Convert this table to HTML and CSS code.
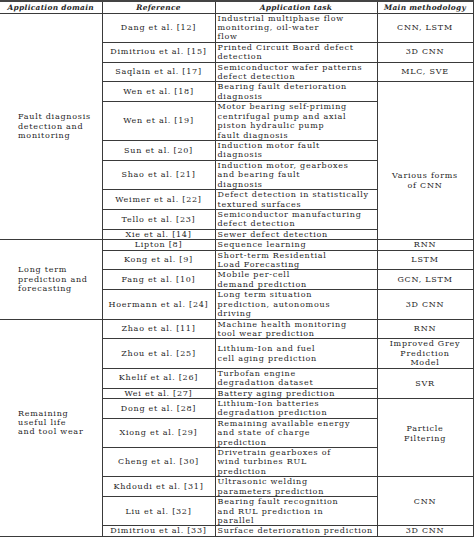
FILE: index.html
```html
<!DOCTYPE html>
<html>
<head>
<meta charset="utf-8">
<link rel="stylesheet" href="styles.css">
</head>
<body>
<table class="tbl">
<colgroup><col class="c1"><col class="c2"><col class="c3"><col class="c4"></colgroup>
<thead>
<tr class="head"><th>Application domain</th><th>Reference</th><th>Application task</th><th>Main methodology</th></tr>
</thead>
<tbody>
<tr><td class="dom" rowspan="10">Fault diagnosis<br>detection and<br>monitoring</td><td class="ref">Dang et al. [12]</td><td class="task">Industrial multiphase flow<br>monitoring, oil-water<br>flow</td><td class="meth">CNN, LSTM</td></tr>
<tr><td class="ref">Dimitriou et al. [15]</td><td class="task">Printed Circuit Board defect<br>detection</td><td class="meth">3D CNN</td></tr>
<tr><td class="ref">Saqlain et al. [17]</td><td class="task">Semiconductor wafer patterns<br>defect detection</td><td class="meth">MLC, SVE</td></tr>
<tr><td class="ref">Wen et al. [18]</td><td class="task">Bearing fault deterioration<br>diagnosis</td><td class="meth shift" rowspan="7">Various forms<br>of CNN</td></tr>
<tr><td class="ref">Wen et al. [19]</td><td class="task">Motor bearing self-priming<br>centrifugal pump and axial<br>piston hydraulic pump<br>fault diagnosis</td></tr>
<tr><td class="ref">Sun et al. [20]</td><td class="task">Induction motor fault<br>diagnosis</td></tr>
<tr><td class="ref">Shao et al. [21]</td><td class="task">Induction motor, gearboxes<br>and bearing fault<br>diagnosis</td></tr>
<tr><td class="ref">Weimer et al. [22]</td><td class="task">Defect detection in statistically<br>textured surfaces</td></tr>
<tr><td class="ref">Tello et al. [23]</td><td class="task">Semiconductor manufacturing<br>defect detection</td></tr>
<tr><td class="ref">Xie et al. [14]</td><td class="task">Sewer defect detection</td></tr>
<tr><td class="dom" rowspan="4">Long term<br>prediction and<br>forecasting</td><td class="ref">Lipton [8]</td><td class="task">Sequence learning</td><td class="meth">RNN</td></tr>
<tr><td class="ref">Kong et al. [9]</td><td class="task">Short-term Residential<br>Load Forecasting</td><td class="meth">LSTM</td></tr>
<tr><td class="ref">Fang et al. [10]</td><td class="task">Mobile per-cell<br>demand prediction</td><td class="meth">GCN, LSTM</td></tr>
<tr><td class="ref">Hoermann et al. [24]</td><td class="task">Long term situation<br>prediction, autonomous<br>driving</td><td class="meth">3D CNN</td></tr>
<tr><td class="dom raise" rowspan="11">Remaining<br>useful life<br>and tool wear</td><td class="ref">Zhao et al. [11]</td><td class="task">Machine health monitoring<br>tool wear prediction</td><td class="meth">RNN</td></tr>
<tr><td class="ref">Zhou et al. [25]</td><td class="task">Lithium-Ion and fuel<br>cell aging prediction</td><td class="meth">Improved Grey<br>Prediction<br>Model</td></tr>
<tr><td class="ref">Khelif et al. [26]</td><td class="task">Turbofan engine<br>degradation dataset</td><td class="meth" rowspan="2">SVR</td></tr>
<tr><td class="ref">Wei et al. [27]</td><td class="task">Battery aging prediction</td></tr>
<tr><td class="ref">Dong et al. [28]</td><td class="task">Lithium-Ion batteries<br>degradation prediction</td><td class="meth lift" rowspan="3">Particle<br>Filtering</td></tr>
<tr><td class="ref">Xiong et al. [29]</td><td class="task">Remaining available energy<br>and state of charge<br>prediction</td></tr>
<tr><td class="ref">Cheng et al. [30]</td><td class="task">Drivetrain gearboxes of<br>wind turbines RUL<br>prediction</td></tr>
<tr><td class="ref">Khdoudi et al. [31]</td><td class="task">Ultrasonic welding<br>parameters prediction</td><td class="meth" rowspan="2">CNN</td></tr>
<tr><td class="ref">Liu et al. [32]</td><td class="task">Bearing fault recognition<br>and RUL prediction in<br>parallel</td></tr>
<tr><td class="ref">Dimitriou et al. [33]</td><td class="task">Surface deterioration prediction</td><td class="meth">3D CNN</td></tr>
</tbody>
</table>
</body>
</html>
```

FILE: styles.css
```css
html, body {
  margin: 0;
  padding: 0;
  background: #ffffff;
}
.tbl {
  border-collapse: collapse;
  table-layout: fixed;
  width: 473px;
  font-family: "DejaVu Serif", "Liberation Serif", serif;
  font-size: 8px;
  letter-spacing: 0.75px;
  line-height: 9.42px;
  color: #262626;
}
.c1 { width: 102px; }
.c2 { width: 113px; }
.c3 { width: 162px; }
.c4 { width: 96px; }
.tbl th, .tbl td {
  padding: 0;
  border: 1px solid #3a3a3a;
  vertical-align: middle;
  white-space: nowrap;
  overflow: hidden;
}
.tbl th {
  font-style: italic;
  font-weight: bold;
  font-size: 7.4px;
  letter-spacing: 0.3px;
  line-height: 9.5px;
  text-align: center;
  border-top: 2px solid #444;
  padding: 1px 0 0;
}
.tbl th:first-child, .tbl td.dom {
  border-left: none;
}
.dom {
  text-align: left;
  padding-left: 18px !important;
}
.raise {
  padding-bottom: 10px !important;
}
.ref {
  text-align: center;
}
.task {
  text-align: left;
  padding-left: 2px !important;
}
.meth {
  text-align: center;
}
.shift {
  padding-top: 40px !important;
}
.lift {
  padding-bottom: 8px !important;
}
```
